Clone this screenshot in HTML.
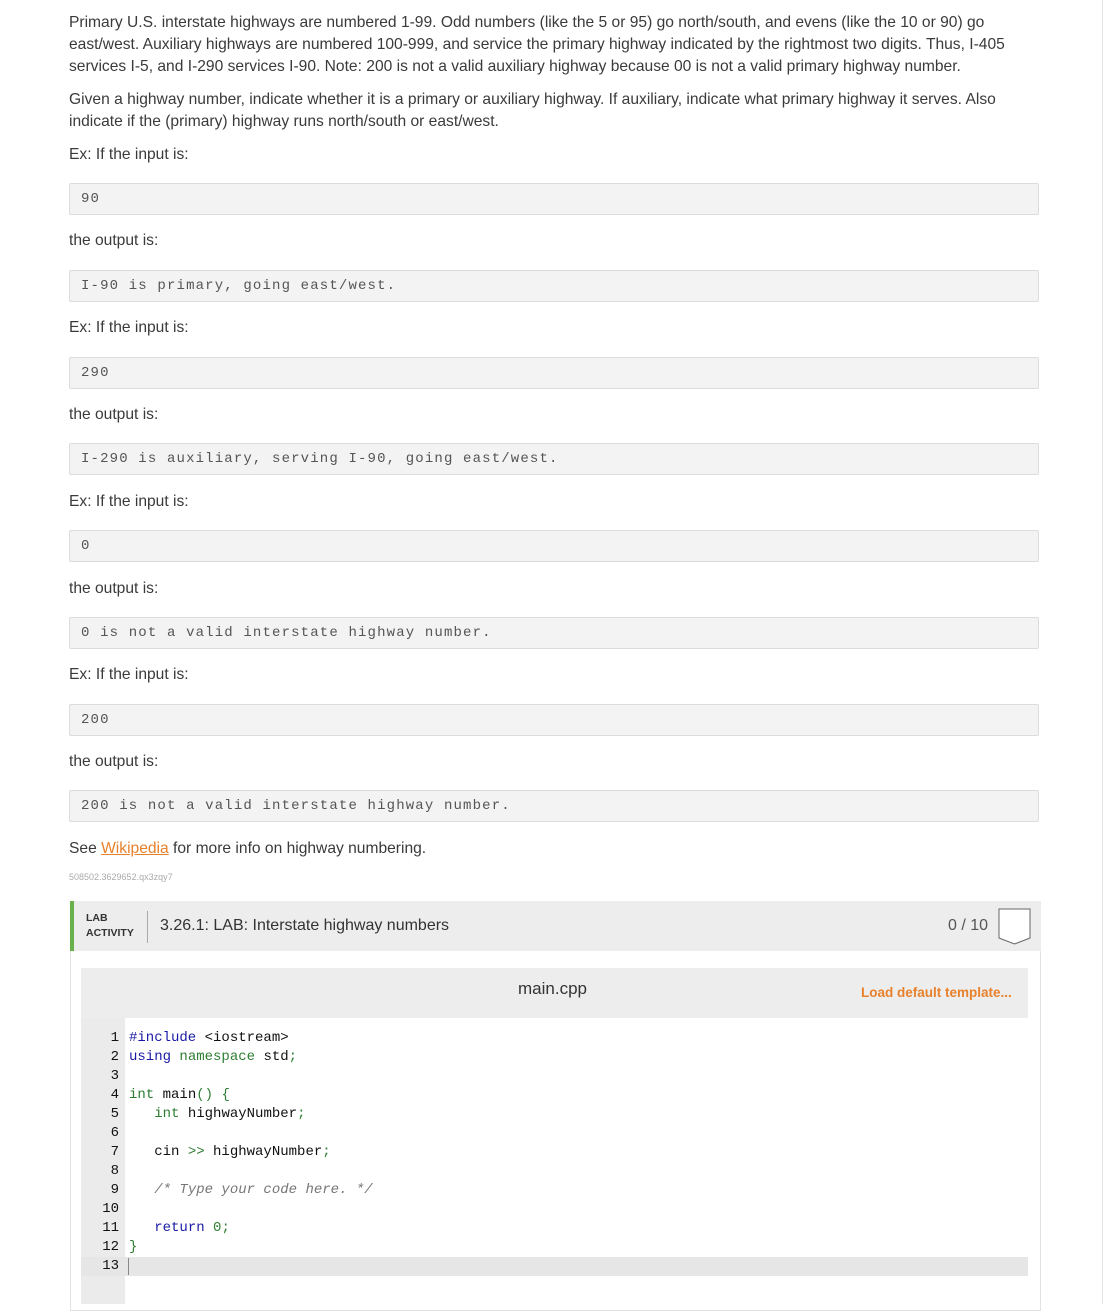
<!DOCTYPE html>
<html><head><meta charset="utf-8"><style>
*{margin:0;padding:0;box-sizing:border-box}
body{width:1108px;height:1304px;background:#fff;position:relative;overflow:hidden;font-family:"Liberation Sans",sans-serif;color:#3a3a3a}
.t{position:absolute;left:69px;font-size:15.6px;white-space:nowrap;line-height:22px}
.b{position:absolute;left:69px;width:970px;height:32px;background:#f3f3f3;border:1px solid #dcdcdc;border-radius:2px;font-family:"Liberation Mono",monospace;font-size:14px;color:#555;padding-left:11px;line-height:30px;letter-spacing:1.15px}
.code{position:absolute;font-family:"Liberation Mono",monospace;font-size:14px;line-height:19px;white-space:pre;color:#111}
.kw{color:#1a1aa6}.g{color:#2e7d32}.c{color:#777;font-style:italic}
</style></head><body>
<div class="t" style="top:12px">Primary U.S. interstate highways are numbered 1-99. Odd numbers (like the 5 or 95) go north/south, and evens (like the 10 or 90) go<br>east/west. Auxiliary highways are numbered 100-999, and service the primary highway indicated by the rightmost two digits. Thus, I-405<br>services I-5, and I-290 services I-90. Note: 200 is not a valid auxiliary highway because 00 is not a valid primary highway number.</div>
<div class="t" style="top:89px">Given a highway number, indicate whether it is a primary or auxiliary highway. If auxiliary, indicate what primary highway it serves. Also<br>indicate if the (primary) highway runs north/south or east/west.</div>
<div class="t" style="top:144px">Ex: If the input is:</div>
<div class="b" style="top:183px">90</div>
<div class="t" style="top:230px">the output is:</div>
<div class="b" style="top:270px">I-90 is primary, going east/west.</div>
<div class="t" style="top:317px">Ex: If the input is:</div>
<div class="b" style="top:357px">290</div>
<div class="t" style="top:404px">the output is:</div>
<div class="b" style="top:443px">I-290 is auxiliary, serving I-90, going east/west.</div>
<div class="t" style="top:491px">Ex: If the input is:</div>
<div class="b" style="top:530px">0</div>
<div class="t" style="top:578px">the output is:</div>
<div class="b" style="top:617px">0 is not a valid interstate highway number.</div>
<div class="t" style="top:664px">Ex: If the input is:</div>
<div class="b" style="top:704px">200</div>
<div class="t" style="top:751px">the output is:</div>
<div class="b" style="top:790px">200 is not a valid interstate highway number.</div>
<div class="t" style="top:838px">See <span style="color:#e8812b;text-decoration:underline">Wikipedia</span> for more info on highway numbering.</div>
<div class="t" style="top:866px;font-size:9px;color:#aaa">508502.3629652.qx3zqy7</div>
<div style="position:absolute;left:1102px;top:0;width:1px;height:1304px;background:#e4e4e4"></div>
<div style="position:absolute;left:70px;top:901px;width:971px;height:410px;border:1px solid #e2e2e2;border-top:none"></div>
<div style="position:absolute;left:70px;top:901px;width:971px;height:50px;background:#ededed;border-left:4px solid #6ab04c"></div>
<div style="position:absolute;left:86px;top:911px;font-size:10.5px;font-weight:bold;line-height:15px;color:#333">LAB<br>ACTIVITY</div>
<div style="position:absolute;left:147px;top:911px;width:1px;height:32px;background:#aaa"></div>
<div style="position:absolute;left:160px;top:917px;font-size:16px;color:#333">3.26.1: LAB: Interstate highway numbers</div>
<div style="position:absolute;left:948px;top:917px;font-size:16px;color:#555">0 / 10</div>
<svg style="position:absolute;left:998px;top:908px" width="34" height="40"><path d="M1 1H32V30L16.5 36L1 30Z" fill="#fff" stroke="#666" stroke-width="1"/></svg>
<div style="position:absolute;left:81px;top:968px;width:947px;height:50px;background:#ededed"></div>
<div style="position:absolute;left:518px;top:979px;font-size:17px;color:#333">main.cpp</div>
<div style="position:absolute;left:861px;top:985px;font-size:13.5px;font-weight:bold;color:#e8812b">Load default template...</div>
<div style="position:absolute;left:81px;top:1018px;width:44px;height:286px;background:#ebebeb"></div>
<div style="position:absolute;left:81px;top:1257px;width:947px;height:19px;background:#e6e6e6"></div>
<div style="position:absolute;left:128px;top:1258px;width:1px;height:17px;background:#888"></div>
<div class="code" style="left:86px;top:1029px;width:33px;text-align:right">1
2
3
4
5
6
7
8
9
10
11
12
13</div>
<div class="code" style="left:129px;top:1029px"><span class="kw">#include</span> &lt;iostream&gt;
<span class="kw">using</span> <span class="g">namespace</span> std<span class="g">;</span>

<span class="g">int</span> main<span class="g">()</span> <span class="g">{</span>
   <span class="g">int</span> highwayNumber<span class="g">;</span>

   cin <span class="g">&gt;&gt;</span> highwayNumber<span class="g">;</span>

   <span class="c">/* Type your code here. */</span>

   <span class="kw">return</span> <span class="g">0;</span>
<span class="g">}</span>
</div>
</body></html>
